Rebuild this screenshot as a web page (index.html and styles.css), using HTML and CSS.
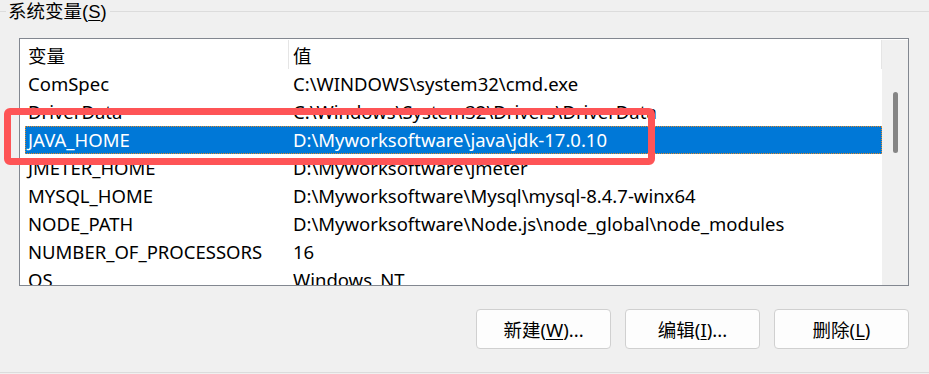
FILE: index.html
```html
<!DOCTYPE html>
<html lang="zh-CN">
<head>
<meta charset="utf-8">
<title>系统变量</title>
<link rel="stylesheet" href="styles.css">
</head>
<body>
<div class="group">
  <div class="group-title">系统变量(<u>S</u>)</div>
  <div class="listbox">
    <div class="list">
      <div class="row header">
        <div class="cell c1">变量</div>
        <div class="cell c2">值</div>
      </div>
      <div class="row"><div class="cell c1">ComSpec</div><div class="cell c2">C:\WINDOWS\system32\cmd.exe</div></div>
      <div class="row"><div class="cell c1">DriverData</div><div class="cell c2">C:\Windows\System32\Drivers\DriverData</div></div>
      <div class="row selected"><div class="cell c1">JAVA_HOME</div><div class="cell c2">D:\Myworksoftware\java\jdk-17.0.10</div></div>
      <div class="row"><div class="cell c1">JMETER_HOME</div><div class="cell c2">D:\Myworksoftware\jmeter</div></div>
      <div class="row"><div class="cell c1">MYSQL_HOME</div><div class="cell c2">D:\Myworksoftware\Mysql\mysql-8.4.7-winx64</div></div>
      <div class="row"><div class="cell c1">NODE_PATH</div><div class="cell c2">D:\Myworksoftware\Node.js\node_global\node_modules</div></div>
      <div class="row"><div class="cell c1">NUMBER_OF_PROCESSORS</div><div class="cell c2">16</div></div>
      <div class="row"><div class="cell c1">OS</div><div class="cell c2">Windows_NT</div></div>
    </div>
    <div class="scrollbar"><div class="thumb"></div></div>
    <div class="highlight"></div>
  </div>
  <div class="buttons">
    <button class="btn">新建(<u>W</u>)...</button>
    <button class="btn">编辑(<u>I</u>)...</button>
    <button class="btn">删除(<u>L</u>)</button>
  </div>
</div>
</body>
</html>
```

FILE: styles.css
```css
html, body {
  margin: 0;
  padding: 0;
}
body {
  width: 929px;
  height: 374px;
  overflow: hidden;
  background: #f0f0f0;
  font-family: "Noto Sans", "Noto Sans CJK SC", sans-serif;
  font-size: 18.5px;
  color: #000;
}
u {
  text-decoration-thickness: 1px;
  text-underline-offset: 2px;
}
.group {
  margin-top: 11px;
  border-top: 1px solid #dcdcdc;
  border-bottom: 1px solid #dcdcdc;
  height: 360px;
  box-sizing: content-box;
}
.group-title {
  width: fit-content;
  margin-top: -11px;
  margin-left: 6px;
  padding: 0 3px 0 2px;
  background: #f0f0f0;
  line-height: 22px;
  height: 22px;
  font-family: "Liberation Sans", "Noto Sans CJK SC", sans-serif;
}
.listbox {
  position: relative;
  margin: 15px 0 0 19px;
  width: 890px;
  height: 248px;
  box-sizing: border-box;
  border: 1px solid #828790;
  background: #fff;
  display: flex;
}
.list {
  width: 862px;
  height: 246px;
  overflow: hidden;
}
.row {
  display: grid;
  grid-template-columns: 264px 1fr;
  height: 28px;
  line-height: 28px;
  margin-left: 5px;
  white-space: nowrap;
  box-sizing: border-box;
}
.row.header {
  height: 31px;
}
.header .cell {
  margin-top: 1px;
  height: 29px;
  line-height: 31px;
  overflow: visible;
}
.header .c1,
.header .c2 {
  border-right: 1px solid #e5e5e5;
}
.c1 {
  padding-left: 3px;
  overflow: hidden;
}
.c2 {
  padding-left: 4px;
  overflow: hidden;
}
.selected {
  background: #0078d7;
  color: #fff;
  outline: 1px dotted #e08a2a;
  outline-offset: -1px;
}
.scrollbar {
  width: 26px;
  margin-top: 1px;
  background: #f0f0f0;
  padding-left: 11px;
  padding-top: 52px;
  box-sizing: border-box;
}
.thumb {
  width: 5px;
  height: 61px;
  border-radius: 3px;
  background: #858585;
}
.highlight {
  position: absolute;
  left: -16px;
  top: 69px;
  width: 651px;
  height: 57px;
  box-sizing: border-box;
  border: 7px solid #fe5456;
  border-radius: 6px;
  pointer-events: none;
}
.buttons {
  display: flex;
  justify-content: flex-end;
  gap: 14px;
  margin-top: 23px;
  padding-right: 20px;
}
.btn {
  width: 135px;
  height: 40px;
  background: #fdfdfd;
  border: 1px solid #d0d0d0;
  border-radius: 4px;
  font-family: inherit;
  font-size: 18.5px;
  color: #000;
  padding: 0;
}
```
